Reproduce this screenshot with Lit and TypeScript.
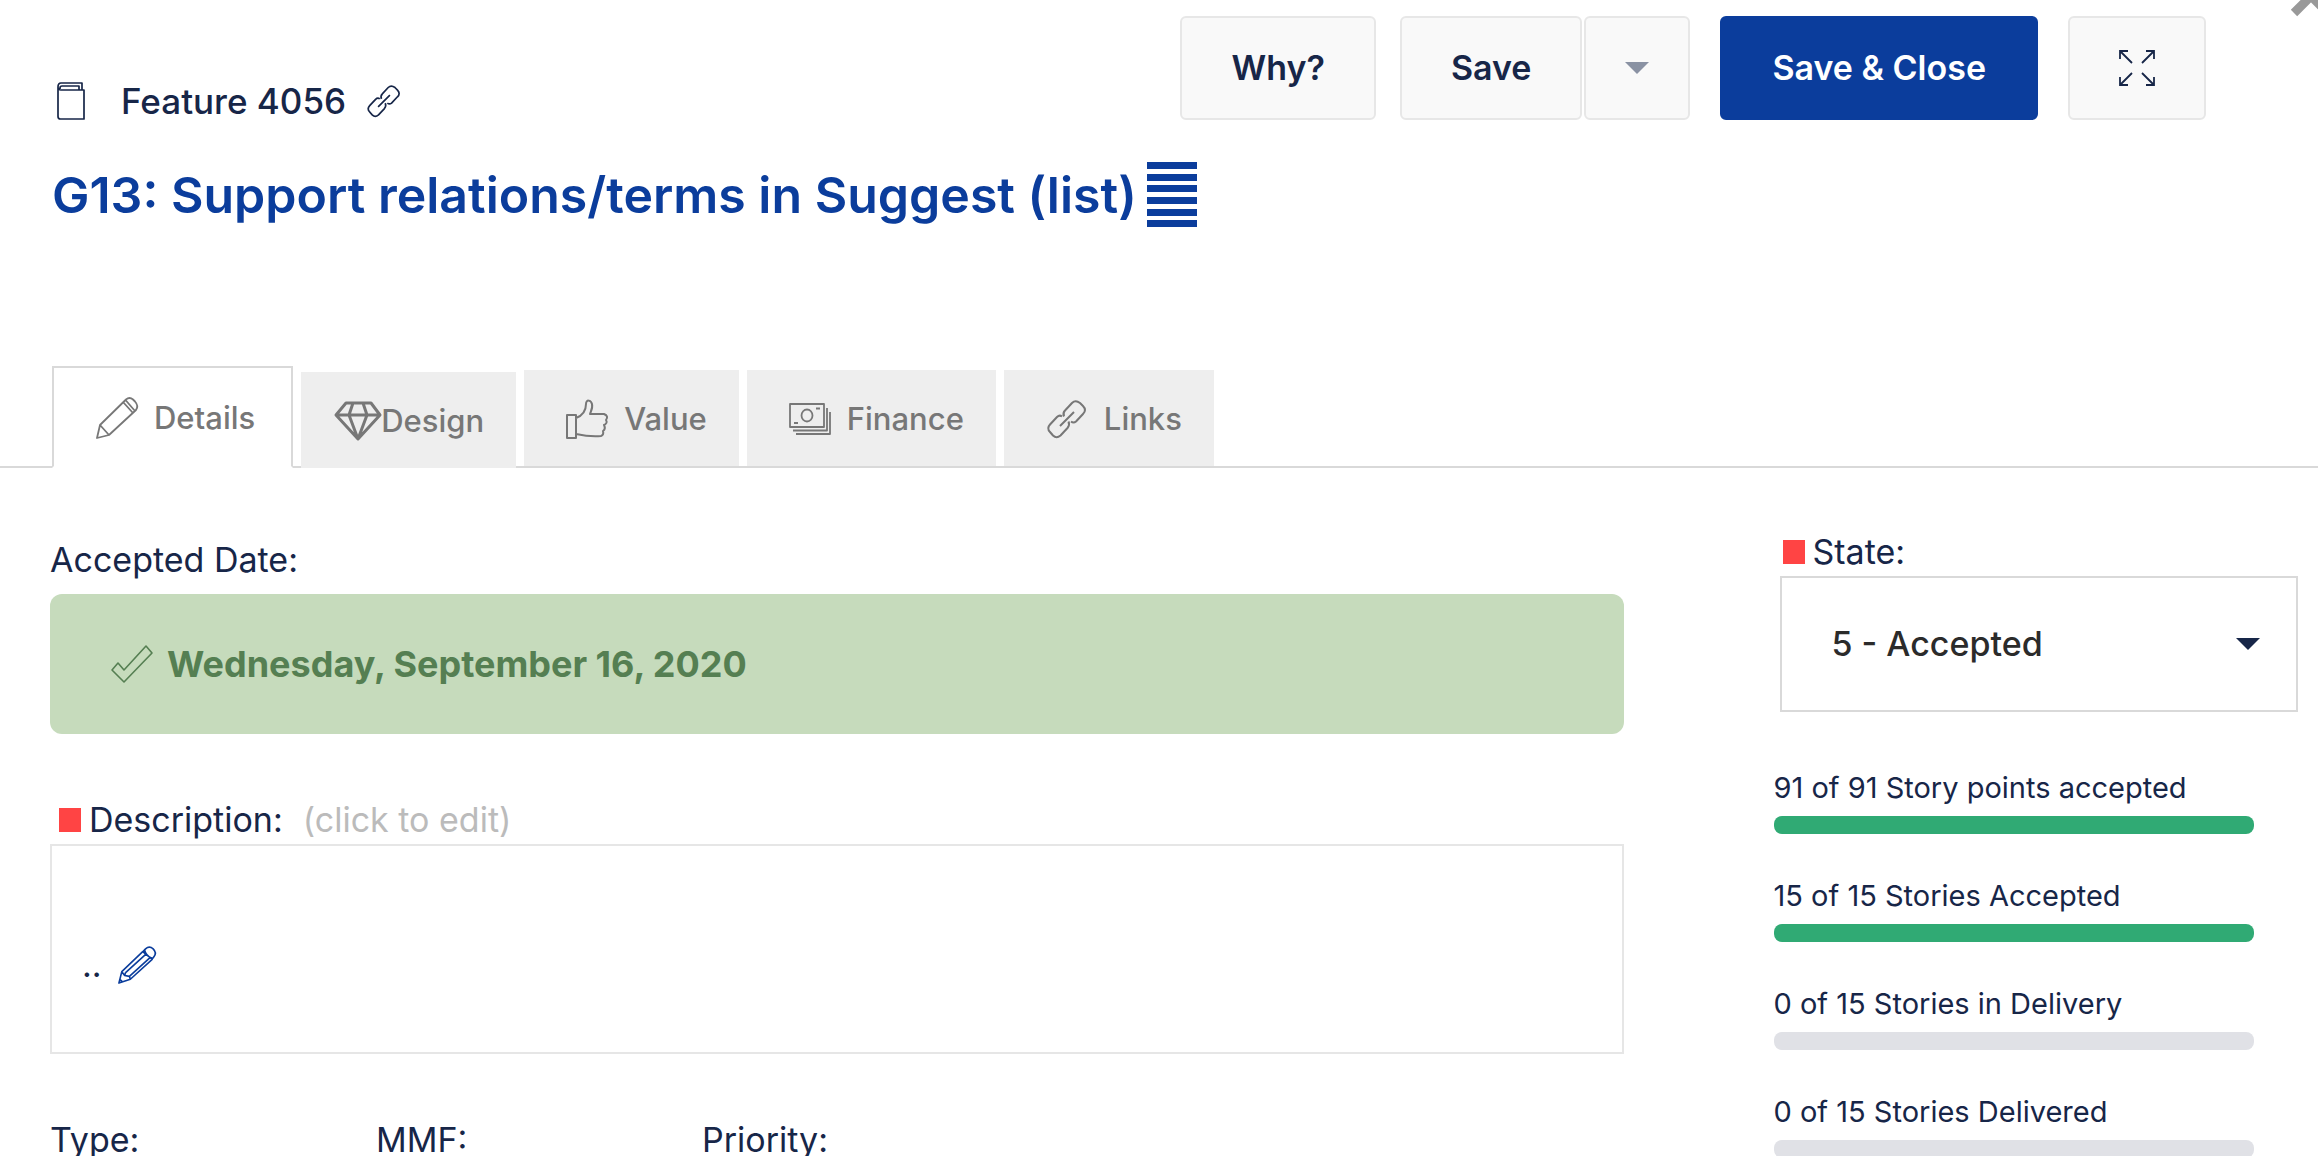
import { LitElement, html, css, svg } from "lit";
import { customElement, property, state } from "lit/decorators.js";

const shapes: Record<string, { box: string; art: unknown }> = {
  book: {
    box: "0 0 28 38",
    art: svg`<path stroke-width="1.700" d="M1 5V34.500Q1 37 3.500 37H27V8H4Q1 8 1 5Q1 1 4 1H25V8M3 7V6Q3 4 5 4H22V8"/>`,
  },
  chain: {
    box: "0 0 42 38",
    art: svg`<path d="M18 16.500Q16.500 13 19 10.500L26 3Q29.500 -.5 34 3L37 6Q41 10 37 14L30 21.500Q27.500 23.500 25 21.500M16 16.500Q13.500 14.500 11 17L4 24.500Q.5 28.500 4 32L7 35.500Q10.500 39 14.500 35.500L21.500 28Q24 25 22.500 21.500M14 26L28 12"/>`,
  },
  bars: {
    box: "0 0 50 66",
    art: svg`<path fill="currentColor" stroke="none" d="M0 0H50V7H0ZM0 12H50V19H0ZM0 23H50V30H0ZM0 35H50V42H0ZM0 47H50V54H0ZM0 58H50V65H0Z"/>`,
  },
  down: { box: "0 0 24 12", art: svg`<path fill="currentColor" stroke="none" d="M0 0H24L12 12Z"/>` },
  expand: {
    box: "0 0 36 36",
    art: svg`<path stroke-width="1.800" stroke-linejoin="miter" d="M1 9V1H9M1 1L13 13M27 1H35V9M35 1L23 13M1 27V35H9M1 35L13 23M35 27V35H27M35 35L23 23"/>`,
  },
  close: { box: "0 0 46 46", art: svg`<path stroke-width="9" d="M6 6L40 40M40 6L6 40"/>` },
  pencil: {
    box: "0 0 42 42",
    art: svg`<path stroke-width="1.800" d="M1 41L4 28L30 2.500Q33.500 -.5 37 2.500L39 4.500Q43 9 40 13L13 38ZM4 28L13 38M27 5L37 16M29.500 3L39 14"/>`,
  },
  gem: {
    box: "0 0 46 40",
    art: svg`<path stroke-width="3" d="M11 2H36L45 14L23 38L1 14ZM1 14H45M18 2L14 14L23 38L32 14L28 2"/>`,
  },
  thumb: {
    box: "0 0 42 40",
    art: svg`<path d="M1 16H10V39H1ZM10 19C18 16 20 10 20 5C20 0 25 1 26 5C27 9 25 12 24 15H38Q43 17 40 21Q42 24 38 26Q40 30 37 32Q38 36 35 37Q24 38 10 35"/>`,
  },
  money: {
    box: "0 0 42 32",
    art: svg`<path stroke-width="1.800" d="M1 1H35V24H1ZM38 5V27.500H4M41 9V31H7M27 5.500H31M5 20H9"/><ellipse stroke-width="1.800" cx="18" cy="12.500" rx="5.500" ry="6"/>`,
  },
  check: {
    box: "0 0 42 38",
    art: svg`<path stroke-width="1.600" d="M1 25L7 18L13 25L35 1L41 8L13 37Z"/>`,
  },
  edit: {
    box: "0 0 40 40",
    art: svg`<path stroke-width="1.700" d="M1 39L4 27L26 6L36 14L13 35ZM4 27L7 31L8 28M7 31L12 32L13 35M8 28L30 8M12 32L34 12M2 35L5 38M26 6L29 3Q33 -.5 37 3Q41 7 38 11L35 15M28 4Q29 10 36 13"/>`,
  },
};

@customElement("line-icon")
class LineIcon extends LitElement {
  @property() name = "book";

  static styles = css`
    :host { display: inline-flex; flex: none; }
    .art { width: 100%; height: 100%; overflow: visible; fill: none; stroke: currentColor; stroke-width: 2; stroke-linejoin: round; }
  `;

  render() {
    const shape = shapes[this.name];
    return html`<svg class="art" viewBox=${shape.box} aria-hidden="true">${shape.art}</svg>`;
  }
}

@customElement("progress-line")
class ProgressLine extends LitElement {
  @property({ type: Number }) done = 0;
  @property({ type: Number }) total = 1;
  @property() label = "";

  static styles = css`
    :host { display: block; }
    .caption { display: block; font-size: 29px; line-height: 40px; margin-bottom: 8px; white-space: nowrap; }
    .track { display: block; appearance: none; width: 100%; height: 18px; border: 0; border-radius: 8px; overflow: hidden; background: #e0e1e6; }
    .track::-webkit-progress-bar { background: #e0e1e6; }
    .track::-webkit-progress-value { background: #30aa74; }
  `;

  render() {
    return html`
      <label class="caption" for="bar">${this.done} of ${this.total} ${this.label}</label>
      <progress class="track" id="bar" max=${this.total} value=${this.done}></progress>
    `;
  }
}

const tabs = [
  { name: "Details", icon: "pencil" },
  { name: "Design", icon: "gem" },
  { name: "Value", icon: "thumb" },
  { name: "Finance", icon: "money" },
  { name: "Links", icon: "chain" },
];

const progress = [
  { done: 91, total: 91, label: "Story points accepted" },
  { done: 15, total: 15, label: "Stories Accepted" },
  { done: 0, total: 15, label: "Stories in Delivery" },
  { done: 0, total: 15, label: "Stories Delivered" },
];

@customElement("app-root")
class AppRoot extends LitElement {
  @state() private active = "Details";

  static styles = css`
    :host {
      display: block; position: relative; box-sizing: border-box; height: 100vh; overflow: hidden auto; scrollbar-width: none;
      background: #fff; color: #172648; font-family: Inter, "Liberation Sans", sans-serif; font-size: 34px; line-height: 48px;
    }
    *, *::before { box-sizing: border-box; }
    button, select { font: inherit; color: inherit; margin: 0; cursor: pointer; }
    .close { position: absolute; top: -27px; right: -16px; width: 46px; height: 46px; padding: 0; border: 0; background: none; color: #999; }
    .close-icon { width: 46px; height: 46px; }

    .top { display: flex; justify-content: space-between; align-items: flex-start; padding: 16px 112px 0 52px; }
    .crumb { display: flex; align-items: center; padding-top: 61px; font-size: 35px; font-weight: 500; white-space: nowrap; }
    .book { width: 28px; height: 38px; margin: 0 36px 0 5px; }
    .permalink { display: flex; color: inherit; margin-left: 20px; }
    .link-icon { width: 36px; height: 32px; }
    .actions { display: flex; gap: 30px; }
    .group { display: flex; gap: 2px; }
    .pair { display: flex; gap: 24px; }
    .button {
      display: flex; align-items: center; justify-content: center; height: 104px; padding: 0 49px; white-space: nowrap;
      border: 2px solid #e7e7e7; border-radius: 6px; background: #f9f9f9; font-weight: 600;
    }
    .primary { padding: 0 50px; background: #0b3d9c; border-color: #0b3d9c; color: #fff; }
    .more { padding: 0 39px; color: #8a92a3; }
    .down { width: 24px; height: 12px; }
    .expand { width: 36px; height: 36px; }

    .title { display: flex; align-items: center; gap: 10px; margin: 36px 52px 0; color: #0b3d9c; font-size: 50px; line-height: 68px; font-weight: 600; }
    .bars { width: 50px; height: 66px; }

    .tabs { display: flex; align-items: flex-end; gap: 8px; margin-top: 137px; padding-left: 52px; border-bottom: 2px solid #d9d9d9; }
    .tab {
      display: flex; align-items: center; gap: 16px; height: 96px; padding: 2px 32px 0 42px; border: 0;
      background: #eee; color: #777; font-size: 31px; font-weight: 500;
    }
    .tab-gem { gap: 0; padding-left: 34px; margin-bottom: -2px; }
    .tab[aria-selected="true"] { height: 102px; margin-bottom: -2px; padding-right: 36px; border: 2px solid #d9d9d9; border-bottom-color: #fff; background: #fff; }
    .pencil { width: 42px; height: 42px; }
    .gem { width: 46px; height: 40px; }
    .thumb { width: 42px; height: 40px; }
    .money { width: 42px; height: 32px; }
    .chain { width: 42px; height: 38px; }

    .body { display: grid; grid-template-columns: 3fr 1fr; gap: 150px; padding: 60px 20px 0 50px; }
    .main { padding-top: 8px; min-width: 0; }
    .side { min-width: 0; }
    .label { display: flex; align-items: center; gap: 8px; white-space: nowrap; }
    .required { padding-left: 9px; }
    .required::before { content: ""; width: 22px; height: 24px; background: #ff4444; }
    .hint { color: #bbb; margin-left: 12px; }
    .accepted { display: flex; align-items: center; gap: 14px; height: 140px; margin: 10px 0 62px; padding-left: 61px; border-radius: 12px; background: #c6dbbc; color: #557f52; font-size: 36px; font-weight: 700; }
    .check { width: 42px; height: 38px; }
    .description { display: flex; align-items: center; gap: 16px; height: 210px; padding: 32px 30px 0; border: 2px solid #e6e6e6; }
    .edit { display: flex; padding: 0; border: 0; background: none; color: #0b3d9c; }
    .edit-icon { width: 38px; height: 40px; }
    .fields { display: grid; grid-template-columns: repeat(auto-fill, 326px); margin-top: 62px; }

    .picker { display: flex; align-items: center; margin-left: 6px; }
    .select { appearance: none; width: 100%; height: 136px; padding: 0 50px; border: 2px solid #d9d9d9; border-radius: 0; background: #fff; color: #2b2b2b; font-weight: 500; }
    .caret { width: 24px; height: 12px; margin-left: -62px; pointer-events: none; }
    .progress { display: grid; gap: 42px; margin: 56px 44px 0 0; padding-bottom: 40px; }
  `;

  private tab(t: (typeof tabs)[number]) {
    return html`<button class="tab tab-${t.icon}" role="tab" aria-selected=${this.active === t.name ? "true" : "false"}
      @click=${() => (this.active = t.name)}><line-icon class=${t.icon} name=${t.icon}></line-icon>${t.name}</button>`;
  }

  render() {
    return html`
      <button class="close" aria-label="Close"><line-icon class="close-icon" name="close"></line-icon></button>
      <header>
        <div class="top">
          <div class="crumb">
            <line-icon class="book" name="book"></line-icon>
            <span>Feature 4056</span>
            <a class="permalink" href="#" aria-label="Permalink"><line-icon class="link-icon" name="chain"></line-icon></a>
          </div>
          <div class="actions">
            <div class="pair">
              <button class="button">Why?</button>
              <div class="group">
                <button class="button">Save</button>
                <button class="button more" aria-label="More save options"><line-icon class="down" name="down"></line-icon></button>
              </div>
            </div>
            <button class="button primary">Save &amp; Close</button>
            <button class="button" aria-label="Full screen"><line-icon class="expand" name="expand"></line-icon></button>
          </div>
        </div>
        <h1 class="title">G13: Support relations/terms in Suggest (list)<line-icon class="bars" name="bars"></line-icon></h1>
      </header>
      <nav class="tabs" role="tablist">${tabs.map((t) => this.tab(t))}</nav>
      <div class="body">
        <main class="main">
          <div class="label">Accepted Date:</div>
          <div class="accepted"><line-icon class="check" name="check"></line-icon>Wednesday, September 16, 2020</div>
          <div class="label required">Description: <span class="hint">(click to edit)</span></div>
          <div class="description"><span>..</span>
            <button class="edit" aria-label="Edit description"><line-icon class="edit-icon" name="edit"></line-icon></button>
          </div>
          <div class="fields"><span>Type:</span><span>MMF:</span><span>Priority:</span></div>
        </main>
        <aside class="side">
          <label class="label required" for="state">State:</label>
          <div class="picker">
            <select class="select" id="state"><option>5 - Accepted</option></select>
            <line-icon class="caret" name="down"></line-icon>
          </div>
          <div class="progress">
            ${progress.map((p) => html`<progress-line .done=${p.done} .total=${p.total} label=${p.label}></progress-line>`)}
          </div>
        </aside>
      </div>
    `;
  }
}
